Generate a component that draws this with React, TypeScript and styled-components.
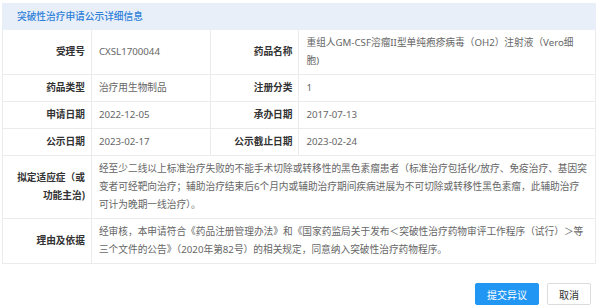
import React from "react";
import styled, { createGlobalStyle } from "styled-components";

const FONT = `"Noto Sans", "Noto Sans CJK SC", sans-serif`;

const Global = createGlobalStyle`
  html, body { margin: 0; padding: 0; background: #fff; }
  body { font-family: ${FONT}; }
`;

const Page = styled.div`
  width: 594px;
  padding: 3px 4px 0 2px;
`;

const TitleBar = styled.div`
  height: 27px;
  line-height: 27px;
  background: #e8eff9;
  color: #2e7fd8;
  font-size: 9.7px;
  font-weight: 500;
  padding-left: 15px;
`;

const Table = styled.table`
  width: 594px;
  table-layout: fixed;
  border-collapse: collapse;
  font-size: 9.7px;
  line-height: 18px;
`;

const Cell = styled.td<{ $label?: boolean; $wide?: boolean }>`
  border: 1px solid #ebebeb;
  border-top: none;
  padding: 4px ${(p) => (p.$label ? 6 : p.$wide ? 6.5 : 10)}px 4px 7px;
  vertical-align: middle;
  text-align: ${(p) => (p.$label ? "right" : "left")};
  color: ${(p) => (p.$label ? "#333" : "#666")};
  font-weight: ${(p) => (p.$label ? 700 : 400)};
`;

const Actions = styled.div`
  display: flex;
  justify-content: flex-end;
  gap: 8px;
  margin-top: 19px;
  padding-right: 5px;
`;

const Button = styled.button<{ $primary?: boolean }>`
  height: 22px;
  width: ${(p) => (p.$primary ? 64 : 44)}px;
  padding: 0;
  border-radius: 2px;
  font-family: ${FONT};
  font-size: 10px;
  cursor: pointer;
  border: 1px solid ${(p) => (p.$primary ? "#2196f3" : "#dcdcdc")};
  background: ${(p) => (p.$primary ? "#2196f3" : "#fff")};
  color: ${(p) => (p.$primary ? "#fff" : "#333")};
`;

export default function App() {
  return (
    <Page>
      <Global />
      <TitleBar>突破性治疗申请公示详细信息</TitleBar>
      <Table>
        <colgroup>
          <col style={{ width: "15%" }} />
          <col style={{ width: "20%" }} />
          <col style={{ width: "15%" }} />
          <col style={{ width: "50%" }} />
        </colgroup>
        <tbody>
          <tr>
            <Cell $label>受理号</Cell>
            <Cell>CXSL1700044</Cell>
            <Cell $label>药品名称</Cell>
            <Cell>重组人GM-CSF溶瘤II型单纯疱疹病毒（OH2）注射液（Vero细胞)</Cell>
          </tr>
          <tr>
            <Cell $label>药品类型</Cell>
            <Cell>治疗用生物制品</Cell>
            <Cell $label>注册分类</Cell>
            <Cell>1</Cell>
          </tr>
          <tr>
            <Cell $label>申请日期</Cell>
            <Cell>2022-12-05</Cell>
            <Cell $label>承办日期</Cell>
            <Cell>2017-07-13</Cell>
          </tr>
          <tr>
            <Cell $label>公示日期</Cell>
            <Cell>2023-02-17</Cell>
            <Cell $label>公示截止日期</Cell>
            <Cell>2023-02-24</Cell>
          </tr>
          <tr>
            <Cell $label>拟定适应症（或功能主治)</Cell>
            <Cell $wide colSpan={3}>
              经至少二线以上标准治疗失败的不能手术切除或转移性的黑色素瘤患者（标准治疗包括化/放疗、免疫治疗、基因突变者可经靶向治疗；辅助治疗结束后6个月内或辅助治疗期间疾病进展为不可切除或转移性黑色素瘤，此辅助治疗可计为晚期一线治疗）。
            </Cell>
          </tr>
          <tr>
            <Cell $label>理由及依据</Cell>
            <Cell $wide colSpan={3}>
              经审核，本申请符合《药品注册管理办法》和《国家药监局关于发布＜突破性治疗药物审评工作程序（试行）＞等三个文件的公告》（2020年第82号）的相关规定，同意纳入突破性治疗药物程序。
            </Cell>
          </tr>
        </tbody>
      </Table>
      <Actions>
        <Button $primary>提交异议</Button>
        <Button>取消</Button>
      </Actions>
    </Page>
  );
}
